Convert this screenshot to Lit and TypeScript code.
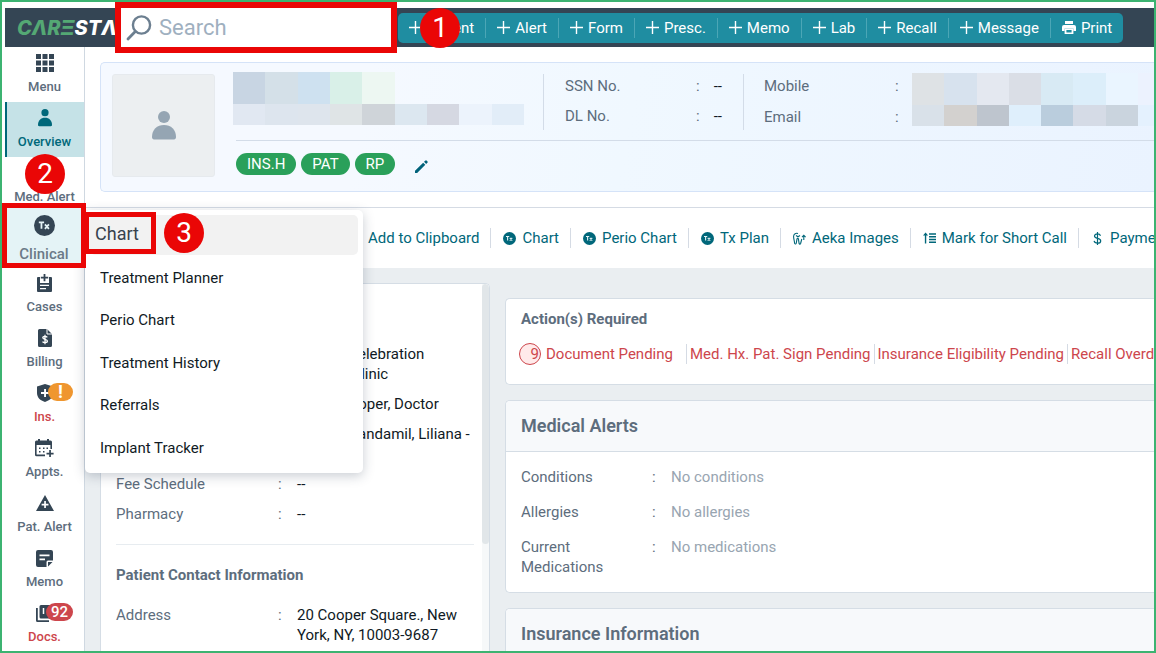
import { LitElement, html, css, svg, TemplateResult, SVGTemplateResult } from "lit";
import { customElement } from "lit/decorators.js";
import { classMap } from "lit/directives/class-map.js";

const icon = (w: number, h: number, box: string, body: SVGTemplateResult): TemplateResult =>
  html`<svg width=${w} height=${h} viewBox=${box} fill="currentColor" aria-hidden="true">${body}</svg>`;

const txGlyph = svg`<circle cx="10" cy="10" r="10"></circle>
  <path d="M4.600 7h5M7.100 7v6.200M10.400 9l3.800 4.200M14.200 9l-3.800 4.200" fill="none" stroke="#e4f3f6" stroke-width="1.700"></path>`;

const icons = {
  plus: icon(13, 13, "0 0 13 13", svg`<path d="M5.800 0h1.400v5.800H13v1.400H7.200V13H5.800V7.200H0V5.800h5.800z"></path>`),
  print: icon(14, 13, "0 0 14 13", svg`<path d="M3 0h8v3H3zM2 4h10a2 2 0 0 1 2 2v4h-2.600V7.600H2.600V10H0V6a2 2 0 0 1 2-2z"></path><path fill-rule="evenodd" d="M2.600 7.600h8.800V13H2.600zM4.400 9v2.500h5.200V9z"></path>`),
  search: icon(26, 26, "0 0 26 26", svg`<circle cx="15.500" cy="10" r="8.600" fill="none" stroke="#6c7f90" stroke-width="2.400"></circle><path d="M9.300 16.600 2 24" stroke="#6c7f90" stroke-width="2.800" stroke-linecap="round"></path>`),
  grid: icon(18, 18, "0 0 18 18", svg`<path d="M0 0h5v5H0zM6.500 0h5v5h-5zM13 0h5v5h-5zM0 6.500h5v5H0zM6.500 6.500h5v5h-5zM13 6.500h5v5h-5zM0 13h5v5H0zM6.500 13h5v5h-5zM13 13h5v5h-5z"></path>`),
  person: icon(14, 18, "0 0 14 18", svg`<circle cx="7" cy="3.700" r="3.600"></circle><path d="M0 16c0-4.500 2.800-7.200 7-7.200s7 2.700 7 7.200c0 .8-.6 1.200-1.200 1.200H1.200C.6 17.200 0 16.800 0 16z"></path>`),
  avatar: icon(24, 29, "0 0 24 29", svg`<circle cx="12" cy="6" r="6"></circle><path d="M0 26c0-7.500 5-12 12-12s12 4.500 12 12c0 1.600-.8 2.500-2 2.500H2c-1.200 0-2-.9-2-2.500z"></path>`),
  warn: icon(18, 16, "0 0 18 16", svg`<path fill-rule="evenodd" d="M9 0l9 16H0zM8.200 6v2.700H5.600v1.700h2.600V13h1.700v-2.600h2.600V8.700H9.900V6z"></path>`),
  tx: icon(21, 21, "0 0 20 20", txGlyph),
  txSmall: icon(13, 13, "0 0 20 20", txGlyph),
  cases: icon(15, 18, "0 0 15 18", svg`<path fill-rule="evenodd" d="M1 3h2v6h9V3h2a1 1 0 0 1 1 1v13a1 1 0 0 1-1 1H1a1 1 0 0 1-1-1V4a1 1 0 0 1 1-1zM3 10.800v1.300h9v-1.300zM3 14v1.300h6V14z"></path><path d="M6.600 0h1.800v2.800h2.800v1.700H8.400v2.800H6.600V4.500H3.800V2.800h2.800z"></path>`),
  billing: icon(14, 18, "0 0 14 18", svg`<path d="M1.500 0H9l5 5v11.500a1.500 1.500 0 0 1-1.500 1.500h-11A1.500 1.500 0 0 1 0 16.500v-15A1.500 1.500 0 0 1 1.500 0z"></path><path d="M9 0v5h5" fill="none" stroke="#fff" stroke-width="1"></path><path d="M9.300 8.300c-.5-.7-1.300-1-2.300-1-1.300 0-2.200.6-2.200 1.500 0 2.200 4.600 1 4.600 3.300 0 1-1 1.600-2.400 1.600-1.100 0-2-.4-2.500-1.100M7 5.800v9.400" fill="none" stroke="#fff" stroke-width="1.300"></path>`),
  shield: icon(16, 18, "0 0 16 18", svg`<path fill-rule="evenodd" d="M8 0l8 2.600V9c0 4.500-3.300 7.500-8 9-4.700-1.500-8-4.500-8-9V2.600zM7.100 5v3H4v1.900h3.100V13H9V9.900h3V8H9V5z"></path>`),
  appts: icon(19, 18, "0 0 19 18", svg`<path fill-rule="evenodd" d="M3 0h2v1.500h7V0h2v1.500h1.500A1.500 1.500 0 0 1 17 3v7h-1.600V6H1.600v9.600H10v1.600H1.500A1.500 1.500 0 0 1 0 15.700V3a1.500 1.500 0 0 1 1.500-1.500H3z"></path><path d="M4 8.500h1.500V10H4zM8 8.500h1.500V10H8zM11.500 8.500H13V10h-1.500zM4 12h1.500v1.500H4zM8 12h1.500v1.500H8zM14.200 11h1.700v2.700h2.700v1.700h-2.700V18h-1.700v-2.600h-2.700v-1.700h2.700z"></path>`),
  memo: icon(17, 17, "0 0 17 17", svg`<path fill-rule="evenodd" d="M2 0h13a2 2 0 0 1 2 2v8.500h-5a1.500 1.500 0 0 0-1.500 1.500v5H2a2 2 0 0 1-2-2V2a2 2 0 0 1 2-2zM3.500 4.500v1.700h10V4.500zM3.500 8.500v1.700H9V8.500z"></path><path d="M12 16.500v-4.500h4.500z"></path>`),
  docs: icon(17, 17, "0 0 17 17", svg`<path d="M0 3h1.800v12.200H13V17H1.500A1.500 1.500 0 0 1 0 15.500zM5 0h12v12a1.500 1.500 0 0 1-1.500 1.500H5A1.500 1.500 0 0 1 3.500 12V1.500A1.500 1.500 0 0 1 5 0z"></path><path d="M7.500 3v6" stroke="#fff" stroke-width="1.500"></path>`),
  pencil: icon(13, 13, "0 0 14 14", svg`<path d="M0 11.700 8.800 2.900l2.300 2.300L2.300 14H0zM9.700 2 11 .7a1.200 1.200 0 0 1 1.700 0l.6.6a1.200 1.200 0 0 1 0 1.700L12 4.300z"></path>`),
  tooth: icon(13, 13, "0 0 13 13", svg`<path d="M1.600 11.500C1.500 9 .5 6.800.6 4.300.7 1.800 3 .7 5 1.600M1.600 11.500c.7.900 1.500.5 1.700-.5L4 6.800c.2-.8 1.200-.8 1.400 0l.7 4.700c.3.900 1.200.9 1.500 0L8.800 7M3 3.500l2 1.300L7 3.500M10.800 8V3.300M9 5.200l1.800-2 1.800 2" fill="none" stroke="currentColor" stroke-width="1.100"></path>`),
  shortCall: icon(13, 12, "0 0 14 12", svg`<path d="M2.800 0 5.500 3.300H3.500V12H2V3.300H0zM6.500.800H14v1.700H6.500zM6.500 3.800H14v1.700H6.500zM6.500 6.800H14v1.700H6.500zM6.500 9.800H14v1.700H6.500z"></path>`),
  dollar: icon(13, 13, "0 0 13 13", svg`<path d="M9.500 3.800C9.100 2.500 8 1.900 6.500 1.900 4.700 1.900 3.500 2.700 3.500 4c0 3.300 6.200 1.600 6.200 4.900 0 1.400-1.300 2.300-3.200 2.300-1.800 0-3.100-.8-3.400-2.300M6.500 0v13" fill="none" stroke="currentColor" stroke-width="1.200"></path>`),
  clipboard: icon(13, 13, "0 0 13 13", svg`<path d="M2 1h9v12H2z"></path>`),
};

const quickAdd = ["Patient", "Alert", "Form", "Presc.", "Memo", "Lab", "Recall", "Message"];

interface NavItem { label: string; glyph: TemplateResult; active?: boolean; alert?: boolean; badge?: string; badgeKind?: string; open?: boolean; }

const nav: NavItem[] = [
  { label: "Menu", glyph: icons.grid },
  { label: "Overview", glyph: icons.person, active: true },
  { label: "Med. Alert", glyph: icons.warn },
  { label: "Clinical", glyph: icons.tx, open: true },
  { label: "Cases", glyph: icons.cases },
  { label: "Billing", glyph: icons.billing },
  { label: "Ins.", glyph: icons.shield, alert: true, badge: "!", badgeKind: "amber" },
  { label: "Appts.", glyph: icons.appts },
  { label: "Pat. Alert", glyph: icons.warn },
  { label: "Memo", glyph: icons.memo },
  { label: "Docs.", glyph: icons.docs, alert: true, badge: "92", badgeKind: "red" },
];

const clinicalMenu = ["Treatment Planner", "Perio Chart", "Treatment History", "Referrals", "Implant Tracker"];

const actions: [string, TemplateResult][] = [
  ["Add to Clipboard", icons.clipboard],
  ["Chart", icons.txSmall],
  ["Perio Chart", icons.txSmall],
  ["Tx Plan", icons.txSmall],
  ["Aeka Images", icons.tooth],
  ["Mark for Short Call", icons.shortCall],
  ["Payments", icons.dollar],
];

const nameMask = [
  "#c8d5e3", "#d4e0e8", "#cee1f0", "#d9f0e8", "#edf7f2", "transparent", "transparent", "transparent", "transparent",
  "#e1e8f2", "#dde5ee", "#dee5ed", "#dfe4e6", "#cfd4d9", "#dce7f0", "#d5d8e2", "#ecf3fc", "#e2edf8",
];
const contactMask = [
  "#dee2e5", "#d7e2ee", "#e4e8f0", "#dadee6", "#d8eaf4", "#dceefa", "#eaf5ff", "#ecf2fe",
  "#d9e1e9", "#d3d1cf", "#bec5ce", "#dfeffc", "#bacddd", "#d5dbe6", "#cad4de", "#e4f1fe",
];

const patientRows: [string, string[]][] = [
  ["Location", ["Central Celebration", "Implant Clinic"]],
  ["Provider", ["Henry Cooper, Doctor"]],
  ["Hygienist", ["Andrea Candamil, Liliana -", "Hygienist"]],
  ["Fee Schedule", ["--"]],
  ["Pharmacy", ["--"]],
];
const contactRows: [string, string[]][] = [["Address", ["20 Cooper Square., New", "York, NY, 10003-9687"]]];

@customElement("app-root")
export class AppRoot extends LitElement {
  static styles = css`
    :host { display: block; font: 400 15px/20px Roboto, "Liberation Sans", sans-serif; color: #101a24; }
    *, *::before { box-sizing: border-box; }
    button, input { font: inherit; color: inherit; background: none; border: 0; margin: 0; padding: 0; }
    button { cursor: pointer; white-space: nowrap; }
    a { color: inherit; text-decoration: none; white-space: nowrap; }
    h2, h3, dl, dd, dt, ul { margin: 0; padding: 0; list-style: none; font-size: inherit; }
    svg { display: block; flex: none; }

    .page { position: relative; height: 100vh; min-height: 400px; display: flex; flex-direction: column; overflow: hidden;
      padding: 6px 0 0 3px; border: 2px solid #3cb371; background: #fff; }

    header { flex: none; display: flex; align-items: center; height: 39px; background: #344554; }
    .logo { width: 110px; padding-left: 12px; overflow: hidden; white-space: nowrap; color: #fff;
      font: italic 800 20px/20px Inter, sans-serif; }
    .logo-care { color: #54a874; }
    .search-slot { position: relative; flex: none; width: 283px; height: 39px; }
    .search { position: absolute; z-index: 4; inset: -6px 1px -6px 0; display: flex; align-items: center; gap: 7px;
      padding-left: 5px; border: 6px solid #ea0606; background: #fff; }
    .search input { flex: 1; min-width: 0; font-size: 22px; line-height: 28px; outline: 0; }
    .search input::placeholder { color: #9fb0bf; opacity: 1; }
    .quick { display: flex; align-items: center; height: 30px; border-radius: 5px; background: #1f8da1; color: #fff; }
    .quick button { display: flex; align-items: center; gap: 5px; height: 20px; padding: 0 11px; }
    .quick button + button { border-left: 1px solid #4ba6b6; }

    .body { flex: 1; min-height: 0; display: flex; }
    nav { flex: none; width: 80px; border-right: 1px solid #cfd8e1; background: #fff; }
    .nav-item { position: relative; display: flex; flex-direction: column; align-items: center; gap: 5px; width: 100%; height: 55px;
      padding-top: 7px; font-size: 13px; font-weight: 500; color: #5d6d7d; }
    .glyph { display: flex; align-items: center; justify-content: center; height: 18px; color: #344554; }
    .nav-item.active { background: #c5e2e7; box-shadow: inset 2px 0 #00687a; color: #00687a; }
    .nav-item.active .glyph { color: #00687a; }
    .nav-item.alert { color: #cd464c; }
    .badge { position: absolute; top: 6px; right: 11px; min-width: 25px; height: 18px; padding: 0 5px; border-radius: 9px;
      color: #fff; font-size: 15px; line-height: 18px; text-align: center; }
    .badge.amber { background: #ef962f; font-size: 18px; font-weight: 700; }
    .badge.red { min-width: 27px; background: #cd464c; }
    .nav-zoom { position: absolute; z-index: 4; inset: -9px -2px -1px -3px; display: flex; flex-direction: column;
      align-items: center; gap: 8px; padding-top: 7px; border: 5px solid #ea0606; background: #e4f3f6;
      font-size: 15px; color: #6b7a88; }
    .nav-zoom svg { color: #344554; }

    main { position: relative; flex: 1; min-width: 0; display: flex; flex-direction: column; }
    .profile { flex: none; padding: 15px 0 15px 15px; border-bottom: 1px solid #d5dbe4; background: #fff; }
    .profile-card { display: flex; gap: 21px; padding: 11px 0 14px 11px; border: 1px solid #d5e3f8; border-right: 0;
      border-radius: 5px 0 0 5px; background: linear-gradient(100deg, #f5f9ff 25%, #f0f8ff 50%, #eaf3ff); overflow: hidden; }
    .photo { flex: none; display: grid; place-items: center; width: 103px; height: 103px; border: 1px solid #e6eaee;
      border-radius: 3px; background: #eceff1; color: #95a5b3; }
    .profile-info { flex: 1; min-width: 0; }
    .facts { display: flex; height: 67px; border-bottom: 1px solid #d3dce8; }
    .identity { flex: none; width: 307px; }
    .mask { display: grid; grid-template-rows: 32px 21px; }
    .name-mask { grid-template-columns: repeat(9, 1fr); width: 291px; margin: -2px 0 0 -3px; }
    .contact-mask { grid-template-columns: repeat(8, 1fr); flex: none; width: 258px; margin-top: -1px; }
    .fact-list { flex: none; display: flex; height: 56px; padding-left: 21px; border-left: 1px solid #d3dce8; color: #5d6d7d; }
    .fact-list.contact { padding-left: 20px; }
    .fact-list.ids { width: 200px; }
    .fact-rows { display: flex; flex-direction: column; gap: 10px; padding-top: 2px; }
    .contact .fact-rows { gap: 11px; }
    .fact { display: flex; }
    .fact dt { width: 131px; }
    .fact dd { display: flex; gap: 14px; width: 17px; white-space: nowrap; }
    .fact b { font-weight: 400; color: #101a24; }
    .tags { display: flex; align-items: center; gap: 5px; padding-top: 12px; }
    .tag { height: 22px; padding: 0 11px; border-radius: 11px; background: #2aa05a; color: #fff; line-height: 22px; }
    .edit { margin-left: 15px; padding-top: 5px; color: #00627a; }

    .actions { flex: none; display: flex; align-items: center; height: 60px; padding-left: 251px; background: #fff; color: #00677a; overflow: hidden; }
    .actions button { display: flex; align-items: center; gap: 6px; height: 20px; padding: 0 11px 0 12px; border-left: 1px solid #d5dbe4; }

    .content { flex: 1; min-height: 0; display: flex; gap: 15px; padding: 15px 0 0 15px; background: #eaeef1; overflow: hidden; }
    .details { position: relative; flex: none; width: 390px; padding: 20px 15px 0; border: 1px solid #d5dde5; border-bottom: 0;
      border-radius: 5px 5px 0 0; background: #fff; overflow: hidden; }
    .scroll { position: absolute; top: 0; right: 0; bottom: 0; width: 7px; background: #f6f8f9; }
    .thumb { height: 260px; border-radius: 4px; background: #e1e6e9; }
    h3 { font-weight: 700; line-height: 20px; color: #5d6d7d; }
    .rows { display: flex; flex-direction: column; gap: 10px; padding: 20px 0; }
    .group + .group { padding-top: 20px; border-top: 1px solid #e7ecf0; }
    .row { display: grid; grid-template-columns: 162px 19px 1fr; color: #5d6d7d; }
    .row dt { padding-right: 15px; }
    .details .value { color: #101a24; white-space: nowrap; }
    .value span { display: block; }

    .cards { flex: 1; min-width: 0; display: flex; flex-direction: column; gap: 15px; padding-top: 15px; }
    .card { flex: none; border: 1px solid #d5dde5; border-right: 0; border-radius: 5px 0 0 5px; background: #fff; overflow: hidden; }
    .card h2 { padding: 15px; border-bottom: 1px solid #d5dde5; background: #f7f9fb; font-size: 18px; font-weight: 600; line-height: 20px; color: #5d6d7d; }
    .card .rows { gap: 15px; padding: 15px; }
    .card .row { grid-template-columns: 131px 19px 1fr; }
    .card .value { color: #98a5b1; }
    .required { padding: 10px 0 19px 15px; }
    .pending { display: flex; align-items: center; height: 22px; margin-top: 14px; color: #cd464c; }
    .count { flex: none; width: 22px; height: 22px; margin: 0 5px 0 -2px; padding-right: 1px; border: 1px solid #cd464c; border-radius: 50%;
      background: #ffeaea; line-height: 20px; text-align: right; }
    .pending a { padding: 0 3px; border-left: 1px solid #d5dbe4; }
    .pending a.first { padding: 0 13px 0 0; border: 0; }

    .flyout { position: absolute; z-index: 3; top: 163px; left: 0; display: flex; flex-direction: column; justify-content: space-between;
      width: 278px; height: 263px; padding: 5px; border-radius: 5px; background: #fff; box-shadow: 0 3px 12px rgba(40, 55, 80, .25); }
    .flyout button { position: relative; height: 40px; padding: 0 10px; border-radius: 5px; text-align: left; }
    .flyout .hot { background: #f2f2f2; }
    .item-zoom { position: absolute; top: -3px; left: -6px; width: 72px; height: 42px; padding-left: 6px; border: 5px solid #ea0606;
      background: #f2f2f2; font-size: 18px; line-height: 34px; color: #37424d; }

    .step { position: absolute; z-index: 5; width: 40px; height: 40px; border-radius: 50%; background: #ea0606; color: #fff;
      font-size: 28px; line-height: 40px; text-align: center; }
    .step.one { top: 6px; left: 418px; }
    .step.two { top: 152px; left: 23px; }
    .step.three { top: 211px; left: 162px; }
  `;

  private navItem(n: NavItem) {
    return html`<li>
      <button class=${classMap({ "nav-item": true, active: !!n.active, alert: !!n.alert })}>
        ${n.open
          ? html`<span class="nav-zoom">${n.glyph}<span>${n.label}</span></span>`
          : html`<span class="glyph">${n.glyph}</span><span>${n.label}</span>`}
        ${n.badge ? html`<span class="badge ${n.badgeKind}">${n.badge}</span>` : ""}
      </button>
    </li>`;
  }

  private rows(list: [string, string[]][]) {
    return html`<dl class="rows">${list.map(([k, lines]) => html`
      <div class="row"><dt>${k}</dt><dd>:</dd><dd class="value">${lines.map((l) => html`<span>${l}</span>`)}</dd></div>`)}</dl>`;
  }

  private mask(kind: string, cells: string[]) {
    return html`<div class="mask ${kind}">${cells.map((c) => html`<i style="background:${c}"></i>`)}</div>`;
  }

  render() {
    return html`<div class="page">
      <header>
        <div class="logo"><span class="logo-care">CΛRΞ</span>STΛCK</div>
        <div class="search-slot">
          <label class="search">${icons.search}<input type="search" placeholder="Search" aria-label="Search" /></label>
        </div>
        <div class="quick">
          ${quickAdd.map((q) => html`<button>${icons.plus}${q}</button>`)}
          <button>${icons.print}Print</button>
        </div>
      </header>

      <div class="body">
        <nav><ul>${nav.map((n) => this.navItem(n))}</ul></nav>
        <main>
          <section class="profile">
            <div class="profile-card">
              <div class="photo">${icons.avatar}</div>
              <div class="profile-info">
                <div class="facts">
                  <div class="identity">${this.mask("name-mask", nameMask)}</div>
                  <div class="fact-list ids">
                    <dl class="fact-rows">
                      <div class="fact"><dt>SSN No.</dt><dd>:<b>--</b></dd></div>
                      <div class="fact"><dt>DL No.</dt><dd>:<b>--</b></dd></div>
                    </dl>
                  </div>
                  <div class="fact-list contact">
                    <dl class="fact-rows">
                      <div class="fact"><dt>Mobile</dt><dd>:</dd></div>
                      <div class="fact"><dt>Email</dt><dd>:</dd></div>
                    </dl>
                    ${this.mask("contact-mask", contactMask)}
                  </div>
                </div>
                <div class="tags">
                  <span class="tag">INS.H</span><span class="tag">PAT</span><span class="tag">RP</span>
                  <button class="edit" aria-label="Edit tags">${icons.pencil}</button>
                </div>
              </div>
            </div>
          </section>

          <div class="actions">${actions.map(([t, g]) => html`<button>${g}${t}</button>`)}</div>

          <div class="content">
            <section class="details">
              <div class="group"><h3>Patient Information</h3>${this.rows(patientRows)}</div>
              <div class="group"><h3>Patient Contact Information</h3>${this.rows(contactRows)}</div>
              <div class="scroll"><div class="thumb"></div></div>
            </section>
            <div class="cards">
              <section class="card required">
                <h3>Action(s) Required</h3>
                <div class="pending">
                  <span class="count">9</span>
                  <a class="first" href="#documents">Document Pending</a>
                  <a href="#sign">Med. Hx. Pat. Sign Pending</a>
                  <a href="#eligibility">Insurance Eligibility Pending</a>
                  <a href="#recall">Recall Overdue</a>
                </div>
              </section>
              <section class="card">
                <h2>Medical Alerts</h2>
                ${this.rows([["Conditions", ["No conditions"]], ["Allergies", ["No allergies"]], ["Current Medications", ["No medications"]]])}
              </section>
              <section class="card">
                <h2>Insurance Information</h2>
                ${this.rows([["Primary", ["--"]]])}
              </section>
            </div>
          </div>

          <div class="flyout">
            <button class="hot"><span class="item-zoom">Chart</span></button>
            ${clinicalMenu.map((m) => html`<button>${m}</button>`)}
          </div>
        </main>
      </div>

      <span class="step one">1</span>
      <span class="step two">2</span>
      <span class="step three">3</span>
    </div>`;
  }
}
